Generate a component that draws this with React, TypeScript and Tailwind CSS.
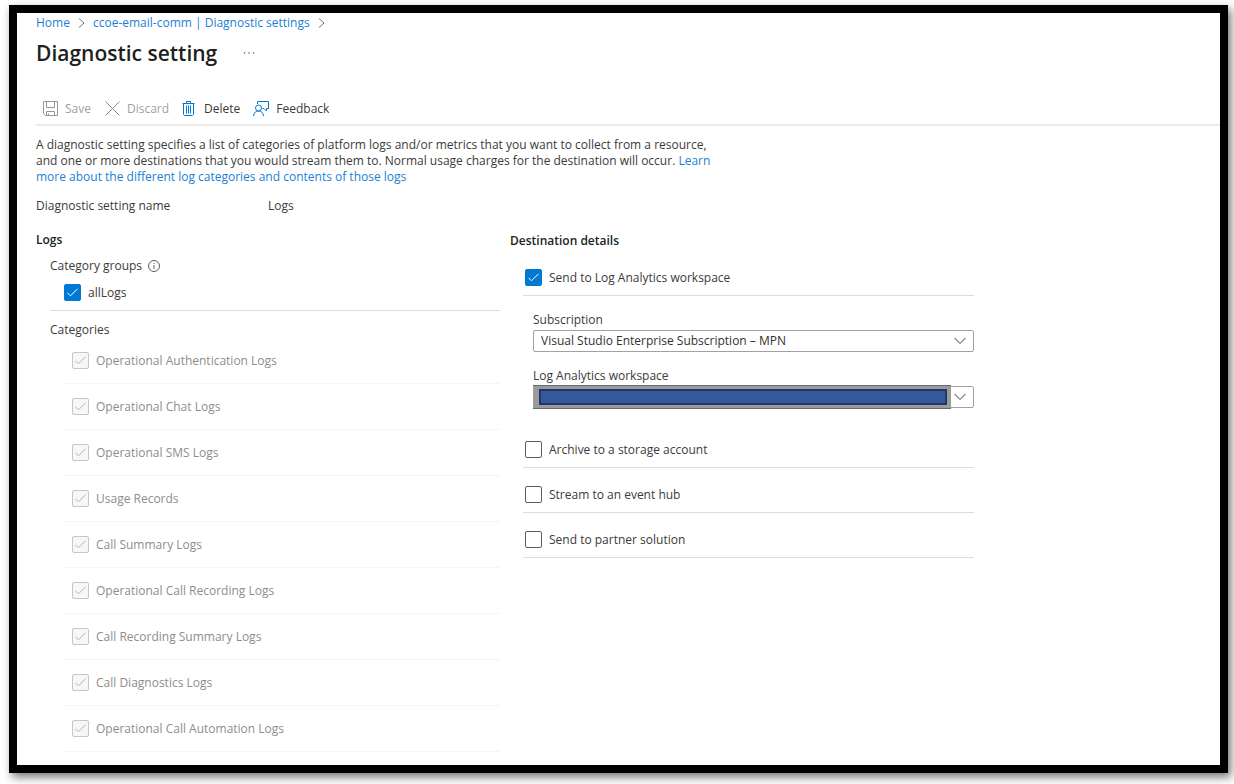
import type { ReactNode } from 'react';

const categories = [
  'Operational Authentication Logs',
  'Operational Chat Logs',
  'Operational SMS Logs',
  'Usage Records',
  'Call Summary Logs',
  'Operational Call Recording Logs',
  'Call Recording Summary Logs',
  'Call Diagnostics Logs',
  'Operational Call Automation Logs',
];

const destinations = ['Archive to a storage account', 'Stream to an event hub', 'Send to partner solution'];

type CheckboxProps = {
  label: string;
  checked?: boolean;
  disabled?: boolean;
};

const Checkbox = ({ label, checked, disabled }: CheckboxProps) => (
  <label className={`flex items-center gap-[7px] ${disabled ? 'text-[#8f8d8b]' : ''}`}>
    <span className="relative h-[17px] w-[17px] shrink-0">
      <input
        type="checkbox"
        defaultChecked={checked}
        disabled={disabled}
        className="peer block h-[17px] w-[17px] appearance-none rounded-xs border border-[#605e5c] bg-white checked:border-[#0078d4] checked:bg-[#0078d4] disabled:border-[#c8c6c4] disabled:bg-[#f8f7f6]"
      />
      <svg
        viewBox="0 0 17 17"
        className="pointer-events-none absolute inset-0 hidden fill-none stroke-white peer-checked:block peer-disabled:stroke-[#b3b0ad]"
      >
        <path d="M3.5 8.8l3 3 7-7" />
      </svg>
    </span>
    {label}
  </label>
);

const Chevron = ({ className }: { className: string }) => (
  <svg viewBox="0 0 12 12" className={`h-3 w-3 fill-none ${className}`}>
    <path d="M0.5 3l5.5 5.5L11.5 3" />
  </svg>
);

const Separator = () => (
  <svg viewBox="0 0 7 12" className="h-3 w-[7px] fill-none stroke-[#797775]">
    <path d="M1 1.5l5 4.5-5 4.5" />
  </svg>
);

type SelectProps = {
  id: string;
  label: string;
  value: string;
  children?: ReactNode;
};

const Select = ({ id, label, value, children }: SelectProps) => (
  <div>
    <label htmlFor={id} className="block leading-4">
      {label}
    </label>
    <div className="relative mt-[2px]">
      <select
        id={id}
        className="block h-[22px] w-full appearance-none rounded-xs border border-[#a3a1a0] bg-white pr-8 pl-[7px] text-[#323130]"
      >
        <option>{value}</option>
      </select>
      <Chevron className="pointer-events-none absolute top-[5px] right-2 stroke-[#3b3a39]" />
      {children}
    </div>
  </div>
);

const Toolbar = () => (
  <div className="mt-6 flex h-[33px] items-center border-b-2 border-[#ebebeb] pl-[7px]">
    <button type="button" disabled className="flex items-center gap-[6px] text-[#a19f9d]">
      <svg viewBox="0 0 16 16" className="h-4 w-4 fill-none stroke-[#979593]">
        <path d="M0.5 0.5h14v14h-12l-2-2zM3.5 0.5v6h8v-6M3.5 14.5v-4h8v4M5.5 12.5v2" />
      </svg>
      Save
    </button>
    <button type="button" disabled className="ml-[14px] flex items-center gap-[6px] text-[#a19f9d]">
      <svg viewBox="0 0 16 16" className="h-4 w-4 fill-none stroke-[#8a8886]">
        <path d="M0.5 0.5l14 14M14.5 0.5l-14 14" />
      </svg>
      Discard
    </button>
    <button type="button" className="ml-[13px] flex items-center gap-2">
      <svg viewBox="0 0 14 16" className="h-4 w-[14px] fill-none stroke-[#0078d4]">
        <path d="M0.5 2.5h12M4.5 2.5v-2h4v2M1.5 2.5v11l1 1h8l1-1v-11" />
        <path d="M4.5 4.5v8M6.5 4.5v8M8.5 4.5v8" />
      </svg>
      Delete
    </button>
    <button type="button" className="ml-[13px] flex items-center gap-[7px]">
      <svg viewBox="0 0 16 16" className="h-4 w-4 fill-none stroke-[#0078d4]">
        <path d="M4.5 3v-2.5h11v7h-2v2.5l-2.5-2.5h-1.5" />
        <circle cx="5.5" cy="7" r="3" />
        <path d="M0.5 15c0.2-3 2.2-5 5-5s4.8 2 5 5" />
      </svg>
      Feedback
    </button>
  </div>
);

const App = () => {
  return (
    <div className="flex min-h-screen bg-white pt-[5px] pr-[6px] pb-[11px] pl-[9px] font-['Open_Sans','Noto_Sans',sans-serif] text-[12px] leading-4 text-[#3b3a39]">
      <main className="w-full border-8 border-black bg-white pl-[19px] shadow-[3px_4px_9px_rgba(0,0,0,0.55)]">
        <nav aria-label="Breadcrumb" className="flex h-5 items-center gap-2 text-[#1a7fd4]">
          <a href="#home">Home</a>
          <Separator />
          <a href="#settings">ccoe-email-comm | Diagnostic settings</a>
          <Separator />
        </nav>

        <div className="mt-1 flex items-center gap-[26px]">
          <h1 className="text-[21px] leading-8 font-semibold text-[#201f1e]">Diagnostic setting</h1>
          <button type="button" aria-label="More">
            <svg viewBox="0 0 12 4" className="h-1 w-3 fill-[#605e5c]">
              <circle cx="1.5" cy="2" r="0.8" />
              <circle cx="6" cy="2" r="0.8" />
              <circle cx="10.5" cy="2" r="0.8" />
            </svg>
          </button>
        </div>

        <Toolbar />

        <p className="mt-[11px] max-w-[720px]">
          A diagnostic setting specifies a list of categories of platform logs and/or metrics that you want to collect
          from a resource,
          <br />
          and one or more destinations that you would stream them to. Normal usage charges for the destination will
          occur.{' '}
          <a href="#learn" className="text-[#1a7fd4]">
            Learn
            <br />
            more about the different log categories and contents of those logs
          </a>
        </p>

        <dl className="mt-3 flex h-[18px] items-center">
          <dt className="w-[232px]">Diagnostic setting name</dt>
          <dd>Logs</dd>
        </dl>

        <div className="mt-4 grid max-w-[938px] grid-cols-2 gap-[10px]">
          <section>
            <h2 className="leading-[18px] font-semibold text-[#201f1e]">Logs</h2>
            <div className="pl-[14px]">
              <h3 className="mt-2 flex h-[18px] items-center gap-[6px]">
                Category groups
                <svg viewBox="0 0 12 12" className="h-3 w-3 fill-none stroke-[#605e5c]">
                  <circle cx="6" cy="6" r="5.5" />
                  <path d="M6 5v4M6 3v1" />
                </svg>
              </h3>
              <div className="border-b border-[#dddddd] pt-[9px] pb-[9px] pl-[14px]">
                <Checkbox label="allLogs" checked />
              </div>
              <h3 className="mt-[11px]">Categories</h3>
              <ul className="pl-[14px]">
                {categories.map((name) => (
                  <li key={name} className="flex h-[46px] items-center border-b border-[#f5f5f5] pl-2">
                    <Checkbox label={name} checked disabled />
                  </li>
                ))}
              </ul>
            </div>
          </section>

          <section>
            <h2 className="pt-px leading-[18px] font-semibold text-[#201f1e]">Destination details</h2>
            <div className="pl-[13px]">
              <div className="mt-[10px] flex h-9 items-center border-b border-[#dddddd] pl-[2px]">
                <Checkbox label="Send to Log Analytics workspace" checked />
              </div>
              <div className="flex flex-col gap-4 pt-4 pl-[10px]">
                <Select id="subscription" label="Subscription" value="Visual Studio Enterprise Subscription – MPN" />
                <Select id="workspace" label="Log Analytics workspace" value="">
                  {/* workspace name is masked */}
                  <div className="absolute -top-px right-[23px] left-0 h-6 border-y border-[#6b6b6b] bg-[#9b9b9b] py-[3px] pr-1 pl-[6px]">
                    <div className="h-full border-2 border-[#1f3864] bg-[#35599c]" />
                  </div>
                </Select>
              </div>
              <div className="mt-[15px]">
                {destinations.map((name) => (
                  <div key={name} className="flex h-[45px] items-center border-b border-[#dddddd] pt-[9px] pl-[2px]">
                    <Checkbox label={name} />
                  </div>
                ))}
              </div>
            </div>
          </section>
        </div>
      </main>
    </div>
  );
};

export default App;
